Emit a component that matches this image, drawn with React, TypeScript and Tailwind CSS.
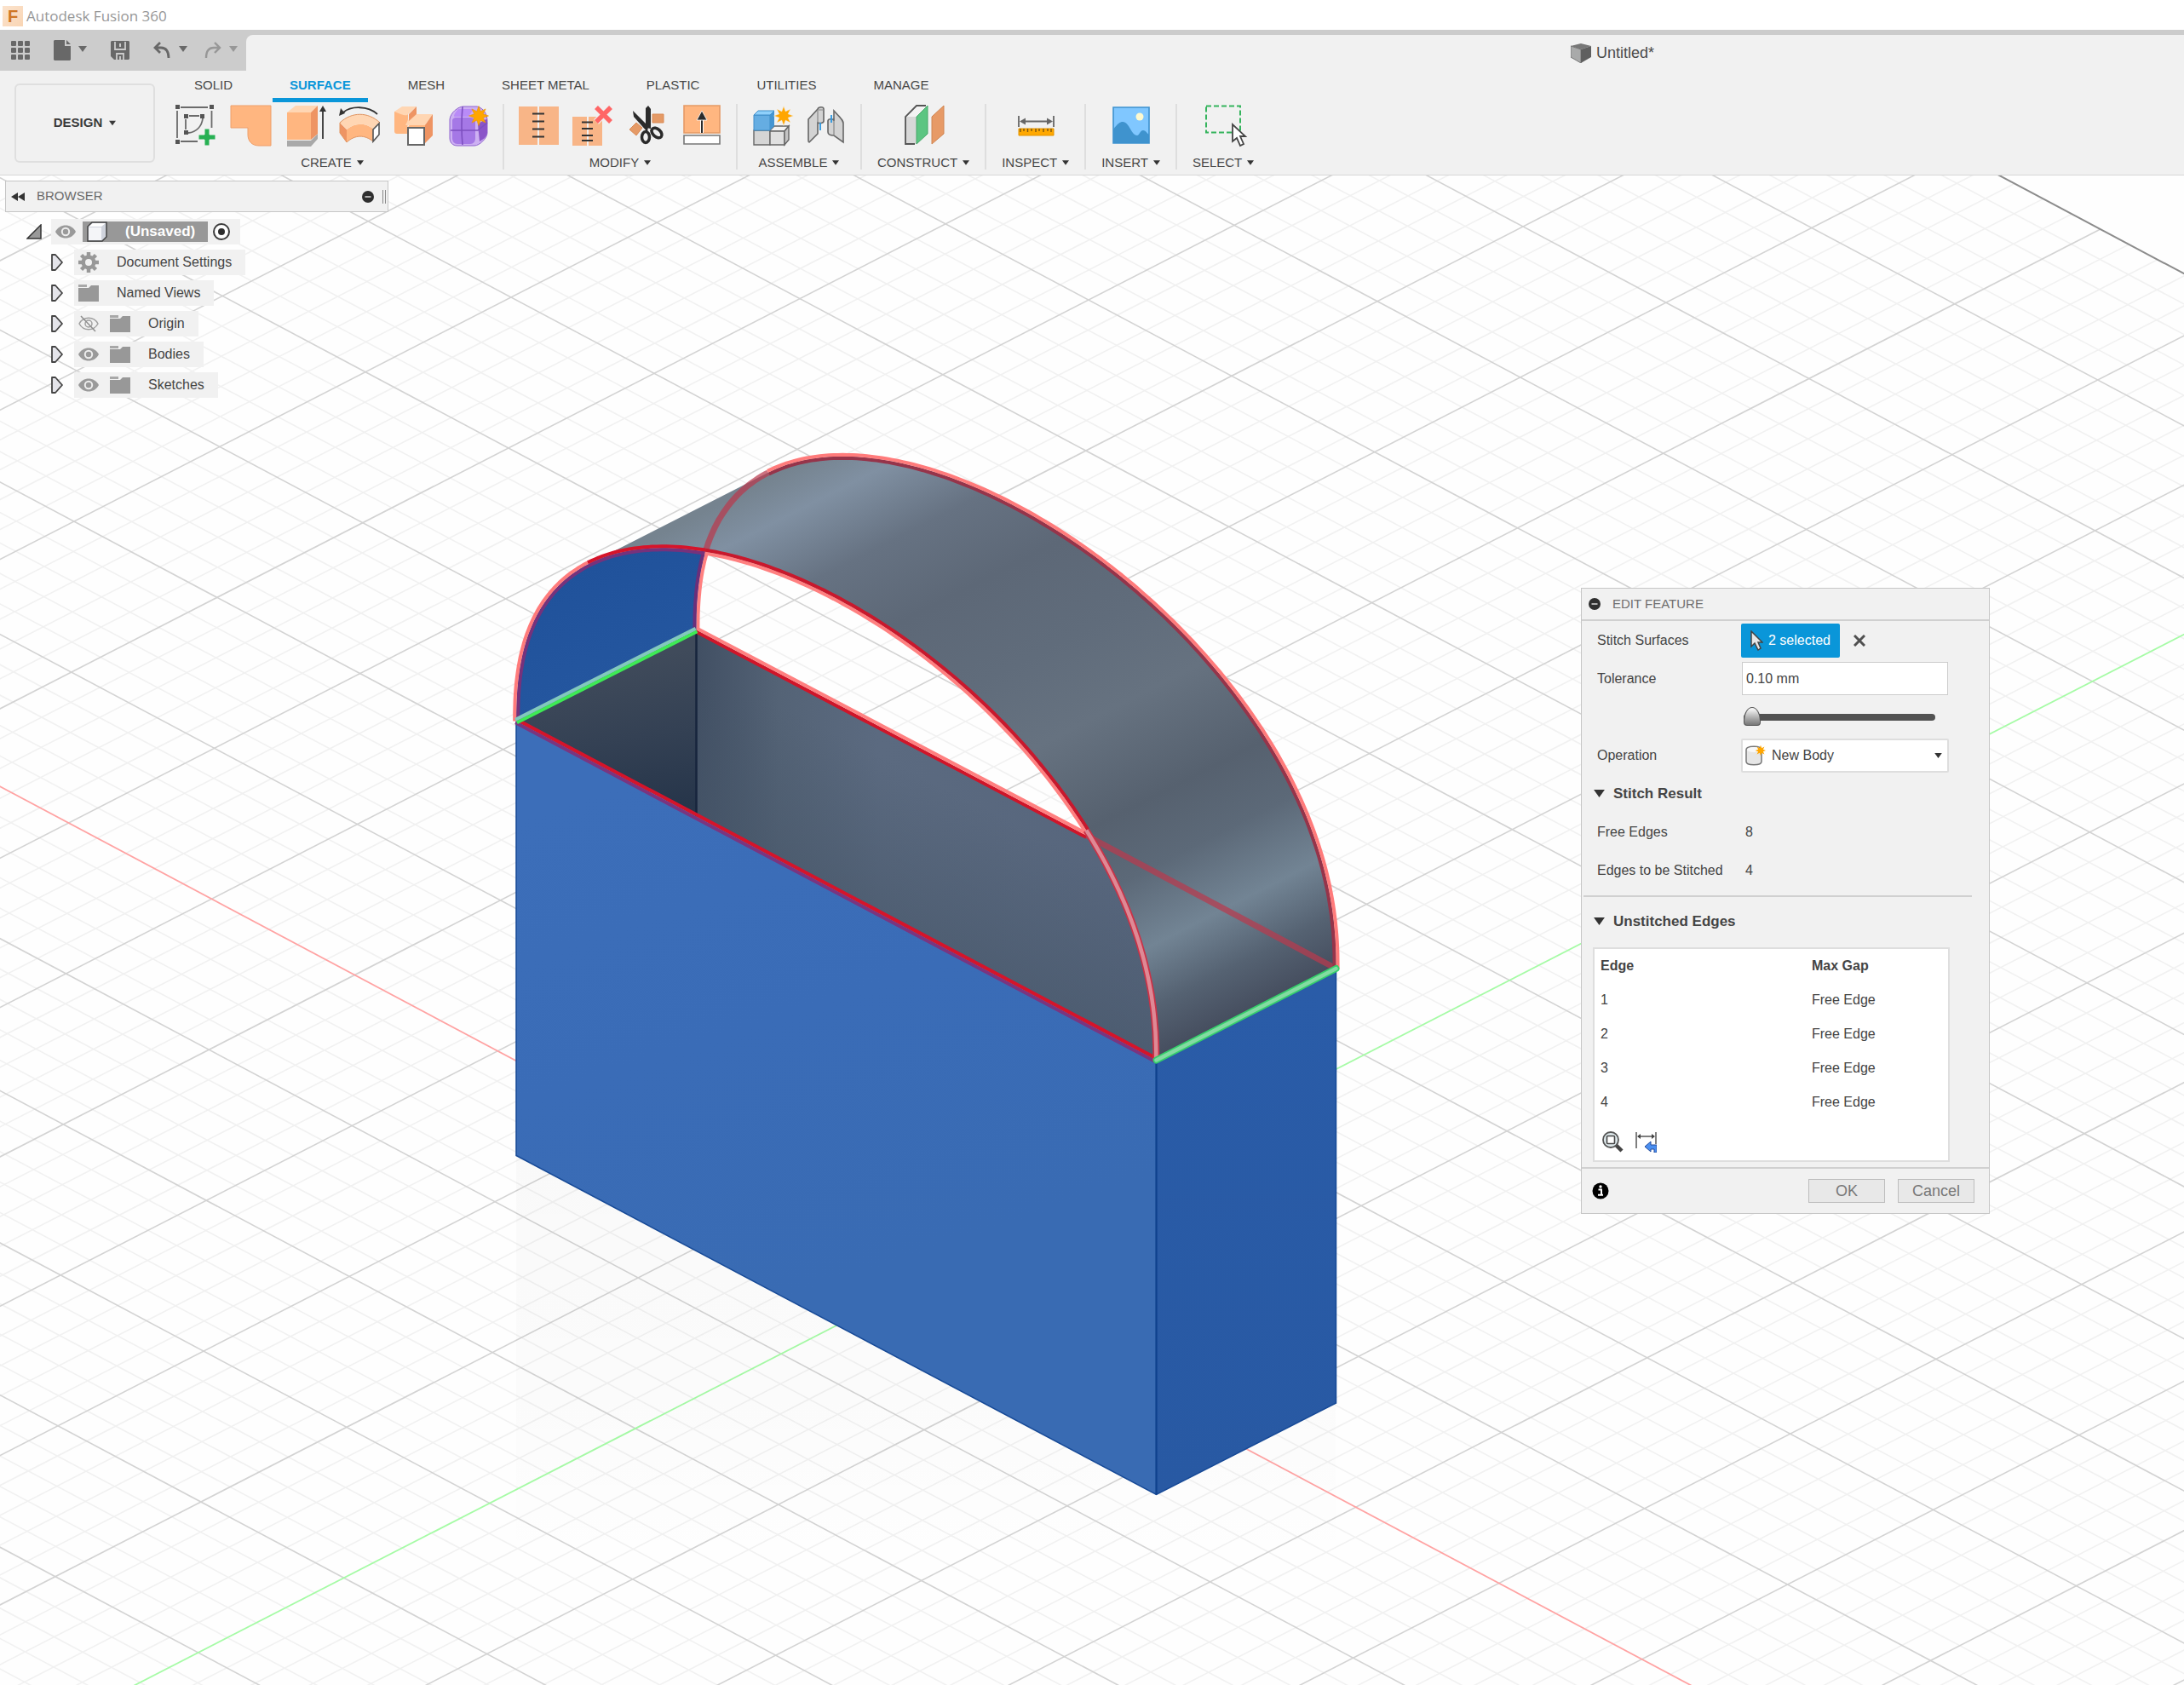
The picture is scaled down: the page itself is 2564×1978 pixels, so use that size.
import { useState, type ReactNode } from "react";
import clsx from "clsx";

type Pt = [number, number];

/* ---------- small shared bits ---------- */

function Caret({ className }: { className?: string }) {
  return (
    <svg viewBox="0 0 10 7" className={clsx("flex-none", className)} fill="currentColor">
      <path d="M0 0h10L5 7z" />
    </svg>
  );
}

function MinusDot({ className }: { className?: string }) {
  return (
    <svg viewBox="0 0 14 14" className={clsx("flex-none", className)}>
      <circle cx="7" cy="7" r="7" fill="#2f2f2f" />
      <path d="M3.5 7h7" stroke="#ddd" strokeWidth="1.5" />
    </svg>
  );
}

const STAR =
  "M0-11.5 2.2-5.2 8.1-8.1 5.2-2.2 11.5 0 5.2 2.2 8.1 8.1 2.2 5.2 0 11.5-2.2 5.2-8.1 8.1-5.2 2.2-11.5 0-5.2-2.2-8.1-8.1-2.2-5.2z";

function RibbonIcon({ children }: { children: ReactNode }) {
  return (
    <svg viewBox="0 0 48 50" className="h-[50px] w-12 overflow-visible" fill="none">
      {children}
    </svg>
  );
}

/* ---------- ribbon icons ---------- */

const icons = {
  sketch: (
    <RibbonIcon>
      <g stroke="#6b6b6b" strokeWidth="1.8">
        <path d="M6 4h32M2 8v32M42.500 8v20M6 44h20M16 14h12M12 18v12M32 17c-1 9-7 16-17 17" />
      </g>
      <g fill="#555">
        <path d="M0 1h5v5H0zM40 1h5v5h-5zM0 42h5v5H0zM10 12h5v5h-5zM29 12h5v5h-5zM10 31h5v5h-5z" />
      </g>
      <path d="M34 29h6v7h7v6h-7v7h-6v-7h-7v-6h7z" fill="#27b053" stroke="#f1f1f1" strokeWidth="1" />
    </RibbonIcon>
  ),
  patch: (
    <RibbonIcon>
      <path d="M1 2h47v47H34c-8 0-13-5-13-13v-8H1z" fill="#ffb680" stroke="#ee9f6b" />
    </RibbonIcon>
  ),
  extrude: (
    <RibbonIcon>
      <path d="M3 43h28l8-8v6l-8 9H3z" fill="#a9a9a9" />
      <path d="M3 10h28v32H3z" fill="#ffb680" />
      <path d="M3 10l10-8h26l-8 8z" fill="#ffd6b3" />
      <path d="M31 10l8-8v33l-8 7z" fill="#ee9463" />
      <path d="M45 41V8" stroke="#333" strokeWidth="1.8" />
      <path d="M41 9l4-7 4 7z" fill="#333" />
    </RibbonIcon>
  ),
  revolve: (
    <RibbonIcon>
      <path d="M1 22l8 8v15L1 34z" fill="#ee9463" />
      <path d="M9 30c10-8 21-8 31-1v15c-10-8-21-8-31 1z" fill="#ffb680" />
      <path d="M1 22c14-13 33-13 47 0l-8 7c-10-7-21-7-31 1z" fill="#ffd6b3" />
      <path d="M1 22c14-13 33-13 47 0M1 22v12l8 11c10-9 21-9 31-1" stroke="#e0935f" />
      <path d="M40 30l7-7v13l-7 8z" fill="#fff" stroke="#555" strokeWidth="1.6" />
      <path d="M45 12C34 2 14 2 5 10" stroke="#333" strokeWidth="1.8" />
      <path d="M0 14l2-9 5 6z" fill="#333" />
    </RibbonIcon>
  ),
  offsetShape: (
    <RibbonIcon>
      <path d="M1 9h16v8l-1 18H4c-2 0-3-1-3-3z" fill="#ffb680" />
      <path d="M17 27l9-12h12v10l-2 21H17z" fill="#ffb680" />
      <path d="M1 9l9-6h17l-10 9c-1 3-9 0-16-3z" fill="#ffd6b3" />
      <path d="M14 25l3-6 10-7h19l-9 13z" fill="#ffd6b3" />
      <path d="M27 3v9l-9 8v-8zM37 25l9-13v25l-9 9z" fill="#ee9463" />
      <path d="M17 28h19v20H17z" fill="#fff" stroke="#666" strokeWidth="2" />
    </RibbonIcon>
  ),
  form: (
    <RibbonIcon>
      <path d="M2 18C3 10 12 3 18 3h16c8 2 12 9 12 17v14c0 6-9 15-15 15H11c-6 0-9-4-9-9z" fill="#cdb0f2" stroke="#8e62cf" />
      <path d="M35 24c4-3 8-6 11-6v16c-1 5-5 8-9 10z" fill="#8a55c8" />
      <path d="M12 6h18l-6 9H8c-3 0 1-6 4-9z" fill="#b98bf7" />
      <path d="M5 20c0-3 2-4 5-4h16c4 0 6 3 6 6v18c0 4-2 7-6 7H11c-4 0-6-3-6-7z" fill="#a578e6" />
      <path d="M17 3c-1 12-1 34 0 45M3 31h32l11-9" stroke="#7d4fc0" strokeWidth="1.6" />
      <path d={STAR} transform="translate(36 14)" fill="#ffa600" stroke="#e79200" strokeWidth=".6" />
    </RibbonIcon>
  ),
  stitch: (
    <RibbonIcon>
      <path d="M1 3h22v45H1zM25 3h23v45H25z" fill="#f8b587" />
      <path d="M17 11.500h14M17 20.500h14M17 29.500h14M17 38.500h14" stroke="#333" strokeWidth="1.8" />
    </RibbonIcon>
  ),
  unstitch: (
    <RibbonIcon>
      <path d="M0 15h17v34H0zM19 15h16v34H19z" fill="#f8b587" />
      <path d="M11 21.500h13M11 29h13M11 37h13M11 43h13" stroke="#333" strokeWidth="1.8" />
      <path d="M28 4l17 17M45 4L28 21" stroke="#f1f1f1" strokeWidth="8" />
      <path d="M28 4l17 17M45 4L28 21" stroke="#ff6666" strokeWidth="5.500" />
    </RibbonIcon>
  ),
  trim: (
    <RibbonIcon>
      <path d="M30 12h13v10H30zM11 22l7 6-7 9-8-7z" fill="#e59a66" stroke="#d98a55" />
      <path d="M7 8l18 18-1 7-16-18zM22 5l3-3 3 4v23l-6-1z" fill="#2b2b2b" />
      <ellipse cx="22" cy="39" rx="4.500" ry="6.500" stroke="#2b2b2b" strokeWidth="3.500" />
      <ellipse cx="35" cy="34" rx="4.500" ry="7" transform="rotate(-48 35 34)" stroke="#2b2b2b" strokeWidth="3.500" />
    </RibbonIcon>
  ),
  extend: (
    <RibbonIcon>
      <path d="M3 2h42v32H3z" fill="#ffb680" stroke="#e59a66" strokeWidth="1.600" />
      <path d="M3 37h42v10H3z" fill="#fff" stroke="#777" strokeWidth="1.600" />
      <path d="M24 34V16" stroke="#fff" strokeWidth="4" />
      <path d="M24 34V14" stroke="#2b2b2b" strokeWidth="2" />
      <path d="M18 19l6-11 6 11z" fill="#2b2b2b" stroke="#fff" strokeWidth=".8" />
    </RibbonIcon>
  ),
  component: (
    <RibbonIcon>
      <path d="M3 31h19v17H3z" fill="#d5d5d5" stroke="#666" strokeWidth="1.400" />
      <path d="M22 31l5-5h17l-5 6H22z" fill="#f3f3f3" stroke="#666" strokeWidth="1.400" />
      <path d="M22 32h17v16H22z" fill="#e0e0e0" stroke="#666" strokeWidth="1.400" />
      <path d="M39 32l5-6v16l-5 6z" fill="#c4c4c4" stroke="#666" strokeWidth="1.400" />
      <path d="M3 13h19v18H3z" fill="#65ade2" stroke="#3f8dc8" />
      <path d="M3 13l5-5h19l-5 5z" fill="#8fd0fb" stroke="#3f8dc8" />
      <path d="M22 13l5-5v18l-5 5z" fill="#4595d1" />
      <path d={STAR} transform="translate(38 14)" fill="#ffa600" stroke="#f1f1f1" strokeWidth=".5" />
    </RibbonIcon>
  ),
  joint: (
    <RibbonIcon>
      <path d="M3 18L14 6c1-3 7-3 7 0v14c0 3-5 3-7 2v13L4 45c-1 0-1 0-1-2z" fill="#d3d3d3" stroke="#666" strokeWidth="1.600" />
      <path d="M14 7v15M15 7h6" stroke="#888" strokeWidth="1.200" />
      <path d="M26 20c0-3 7-3 7 0V8c8 9 11 11 11 15v22l-11-8c-4 0-7-1-7-4z" fill="#d3d3d3" stroke="#666" strokeWidth="1.600" />
      <path d="M33 19v17M33 9v8" stroke="#888" strokeWidth="1.200" />
      <path d="M17 22v9M30 13v9" stroke="#2a96e0" strokeWidth="1.800" />
    </RibbonIcon>
  ),
  construct: (
    <RibbonIcon>
      <path d="M3 15L16 2h13L16 15z" fill="#f3f3f3" />
      <path d="M3 15h13v32H3z" fill="#d8d8d8" />
      <path d="M27 2H16L3 15v32h11" stroke="#555" strokeWidth="1.800" />
      <path d="M16 15L29 2v33L16 47z" fill="#5cc582" stroke="#46a869" />
      <path d="M34 15L48 2v33L34 47z" fill="#e79a66" stroke="#d08653" />
    </RibbonIcon>
  ),
  measure: (
    <RibbonIcon>
      <path d="M4 14v13M45 14v13M8 20.500h33" stroke="#666" strokeWidth="1.800" />
      <path d="M5 20.500l7-4v8zM44 20.500l-7-4v8z" fill="#666" />
      <path d="M4 29h41v8H4z" fill="#ffa800" stroke="#e39400" />
      <path d="M6 29v4M10 29v3M14.500 29v4M19 29v3M24 29v4M28 29v3M33 29v4M38 29v3M42 29v4" stroke="#7a5410" strokeWidth="1.400" />
    </RibbonIcon>
  ),
  picture: (
    <RibbonIcon>
      <path d="M3 4h42v42H3z" fill="#80c7ff" />
      <path d="M3 30c5-7 8-9 11-9 8 0 10 16 17 16 3 0 3-6 7-6 3 0 4 3 7 5v10H3z" fill="#3f93ce" />
      <circle cx="34" cy="15" r="4.500" fill="#fdf9cf" />
      <path d="M3 4h42v42H3z" stroke="#3c92cf" strokeWidth="1.600" />
    </RibbonIcon>
  ),
  select: (
    <RibbonIcon>
      <path d="M4 2.500h40v31H4z" stroke="#35b45d" strokeWidth="2" strokeDasharray="6 3" />
      <path d="M35 24v20l5-4 4 9 4-2-4-9h6z" fill="#fff" stroke="#444" strokeWidth="1.800" />
    </RibbonIcon>
  ),
};

const groups: { label: string; tools: { name: string; icon: ReactNode }[] }[] = [
  {
    label: "CREATE",
    tools: [
      { name: "Create Sketch", icon: icons.sketch },
      { name: "Patch", icon: icons.patch },
      { name: "Extrude", icon: icons.extrude },
      { name: "Revolve", icon: icons.revolve },
      { name: "Offset", icon: icons.offsetShape },
      { name: "Create Form", icon: icons.form },
    ],
  },
  {
    label: "MODIFY",
    tools: [
      { name: "Stitch", icon: icons.stitch },
      { name: "Unstitch", icon: icons.unstitch },
      { name: "Trim", icon: icons.trim },
      { name: "Extend", icon: icons.extend },
    ],
  },
  {
    label: "ASSEMBLE",
    tools: [
      { name: "New Component", icon: icons.component },
      { name: "Joint", icon: icons.joint },
    ],
  },
  { label: "CONSTRUCT", tools: [{ name: "Offset Plane", icon: icons.construct }] },
  { label: "INSPECT", tools: [{ name: "Measure", icon: icons.measure }] },
  { label: "INSERT", tools: [{ name: "Canvas", icon: icons.picture }] },
  { label: "SELECT", tools: [{ name: "Window Selection", icon: icons.select }] },
];

const tabs = ["SOLID", "SURFACE", "MESH", "SHEET METAL", "PLASTIC", "UTILITIES", "MANAGE"];

/* ---------- header ---------- */

function TitleBar() {
  return (
    <div className="flex h-[35px] items-center gap-1 bg-white pt-[2px] pl-[3px]">
      <span className="grid h-6 w-6 place-items-center bg-linear-to-br from-[#fbe3cd] to-[#f9d5b4] text-xl leading-none font-black text-[#cf7626]">
        F
      </span>
      <span className="font-['Open_Sans',sans-serif] text-[17px] text-[#979797]">Autodesk Fusion 360</span>
    </div>
  );
}

function QuickAccess() {
  return (
    <div className="flex h-12 w-[289px] flex-none items-center pl-[13px] text-[#686868]">
      <button aria-label="Data Panel">
        <svg viewBox="0 0 22 22" className="h-[22px] w-[22px]" fill="currentColor">
          {[0, 8, 16].map((y) => [0, 8, 16].map((x) => <rect key={`${x}-${y}`} x={x} y={y} width="6" height="6" rx="1" />))}
        </svg>
      </button>
      <button aria-label="File" className="ml-7 flex items-center gap-[9px]">
        <svg viewBox="0 0 20 24" className="h-6 w-5" fill="currentColor">
          <path d="M1 0h12v7h7v16l-1 1H1l-1-1V1zM15 0l5 5h-5z" />
        </svg>
        <Caret className="mb-1 h-[7px] w-[10px]" />
      </button>
      <button aria-label="Save" className="ml-7">
        <svg viewBox="0 0 22 22" className="h-[22px] w-[22px]">
          <path d="M1 0h20l1 1v20l-1 1H4l-4-4V1z" fill="currentColor" />
          <path d="M5 1v9h12V1M7 22v-7h8v7M11 22v-4" fill="none" stroke="#ccc" strokeWidth="1.800" />
          <path d="M11 3v4" stroke="#ccc" strokeWidth="2" />
        </svg>
      </button>
      <button aria-label="Undo" className="ml-7 flex items-center gap-[10px]">
        <svg viewBox="0 0 20 20" className="h-5 w-5" fill="none" stroke="currentColor" strokeWidth="2.800">
          <path d="M8 1L2 7l6 6M2 7h7c6 0 9 4 9 12" />
        </svg>
        <Caret className="mb-1 h-[7px] w-[10px]" />
      </button>
      <button aria-label="Redo" className="ml-5 flex items-center gap-[9px] text-[#979797]">
        <svg viewBox="0 0 20 20" className="h-5 w-5" fill="none" stroke="currentColor" strokeWidth="2.400">
          <path d="M12 1l6 6-6 6M18 7h-7C5 7 2 11 2 19" />
        </svg>
        <Caret className="mb-1 h-[7px] w-[10px]" />
      </button>
    </div>
  );
}

function Ribbon() {
  const [active, setActive] = useState("SURFACE");
  return (
    <div className="flex h-[123px] border-b border-[#d6d6d6] bg-[#f1f1f1] pl-[17px] text-[15px] text-[#474747]">
      <button className="mt-[15px] flex h-[93px] w-[165px] flex-none items-center justify-center gap-2 rounded-md border-2 border-[#dfdfdf] font-bold text-[#3a3a3a]">
        DESIGN
        <Caret className="h-[7px] w-2" />
      </button>
      <div className="flex flex-col">
        <nav className="ml-[26px] flex gap-[27px]">
          {tabs.map((tab) => (
            <button
              key={tab}
              onClick={() => setActive(tab)}
              className={clsx(
                "h-[37px] border-b-5 px-5 pt-[2px]",
                tab === active ? "border-[#0a96d9] font-bold text-[#0a96d9]" : "border-transparent",
              )}
            >
              {tab}
            </button>
          ))}
        </nav>
        <div className="ml-2 flex pt-[2px]">
          {groups.map((g, i) => (
            <div key={g.label} className="flex">
              {i > 0 && <div className="h-[77px] w-[2px] bg-[#dedede]" />}
              <div className="flex flex-col items-center px-2">
                <div className="flex">
                  {g.tools.map((tool) => (
                    <button key={tool.name} aria-label={tool.name} className="flex w-16 justify-center">
                      {tool.icon}
                    </button>
                  ))}
                </div>
                <button className="mt-[5px] flex h-7 items-center gap-[6px] px-[10px]">
                  {g.label}
                  <Caret className="h-[6px] w-2 text-[#333]" />
                </button>
              </div>
            </div>
          ))}
        </div>
      </div>
    </div>
  );
}

function Header() {
  return (
    <header>
      <TitleBar />
      <div className="flex h-12 bg-[#ccc]">
        <QuickAccess />
        <div className="mt-[6px] flex flex-1 items-center rounded-tl-lg bg-[#f1f1f1] text-lg text-[#4a4a4a]">
          <div className="grow-5" />
          <svg viewBox="0 0 24 24" className="mr-[6px] h-6 w-6">
            <path d="M0 4l12-3 12 3-12 4z" fill="#777" />
            <path d="M0 4l12 4v16L0 17z" fill="#a9aaaa" stroke="#777" />
            <path d="M24 4L12 8v16l12-7z" fill="#5f5f5f" />
          </svg>
          <span>Untitled*</span>
          <div className="grow-2" />
        </div>
      </div>
      <Ribbon />
    </header>
  );
}

/* ---------- 3D canvas ---------- */

const ORIGIN: Pt = [1088, 1501.5];
const STEP_X: Pt = [167.9, 89.25];
const STEP_Y: Pt = [171.05, -87.7];
const EDGE_ROW = 11;

const grid = (m: number, n: number): Pt => [
  ORIGIN[0] + m * STEP_X[0] + n * STEP_Y[0],
  ORIGIN[1] + m * STEP_X[1] + n * STEP_Y[1],
];

// vertices of the open box, and the arch that stands on it
const L: Pt = [606, 846.5];
const B: Pt = [817.5, 739.5];
const F: Pt = [1357.5, 1244.5];
const R: Pt = [1568.5, 1137];
const FRONT: Pt = [981.75, 1045.5];
const BACK: Pt = [1193, 938];
const HEIGHT = 510;

// where the outline of the arch turns away, and where the two rims cross
const TURN = 39.2;
const CROSS_FRONT = 65.8;
const CROSS_BACK = 13.7;
const CROSS_WALL = 141.4;

// the profile is a little squarer than an ellipse
function arc(c: Pt, from: number, to: number): Pt[] {
  const n = Math.max(2, Math.ceil(Math.abs(to - from)));
  return Array.from({ length: n + 1 }, (_, i) => {
    const t = ((from + ((to - from) * i) / n) * Math.PI) / 180;
    const rise = Math.pow(Math.max(0, Math.sin(t)), 0.88);
    return [c[0] - 375.6 * Math.cos(t), c[1] - 199 * Math.cos(t) - 343 * rise];
  });
}

// moves a polyline sideways; positive is to the left of its direction
function shift(pts: Pt[], d: number): Pt[] {
  return pts.map(([x, y], i) => {
    const a = pts[Math.max(0, i - 1)];
    const b = pts[Math.min(pts.length - 1, i + 1)];
    const len = Math.hypot(b[0] - a[0], b[1] - a[1]);
    return [x + ((b[1] - a[1]) / len) * d, y - ((b[0] - a[0]) / len) * d];
  });
}

const str = (pts: Pt[]) => pts.map(([x, y]) => `${x.toFixed(1)},${y.toFixed(1)}`).join(" ");

function Edge({ pts, outer, inner }: { pts: Pt[]; outer: string; inner: string }) {
  return (
    <g fill="none" strokeWidth="4" strokeLinejoin="round">
      <polyline points={str(shift(pts, -2))} stroke={inner} />
      <polyline points={str(shift(pts, 2))} stroke={outer} />
    </g>
  );
}

function GridLine({ from, to, stroke, width }: { from: Pt; to: Pt; stroke: string; width: number }) {
  return <line x1={from[0]} y1={from[1]} x2={to[0]} y2={to[1]} stroke={stroke} strokeWidth={width} />;
}

function Grid() {
  const minor: ReactNode[] = [];
  const major: ReactNode[] = [];
  for (let i = -60; i <= 60; i++) {
    const k = i / 5;
    if (i === 0) continue;
    const bold = i % 5 === 0;
    const stroke = bold ? "#d3d3d3" : "#f1f1f1";
    const list = bold ? major : minor;
    list.push(<GridLine key={`y${i}`} from={grid(k, -16)} to={grid(k, EDGE_ROW)} stroke={stroke} width={1.6} />);
    if (k < EDGE_ROW) {
      list.push(<GridLine key={`x${i}`} from={grid(-16, k)} to={grid(16, k)} stroke={stroke} width={1.6} />);
    }
  }
  return (
    <g>
      {minor}
      {major}
      <GridLine from={grid(-16, EDGE_ROW)} to={grid(16, EDGE_ROW)} stroke="#8c8c8c" width={2} />
      <GridLine from={grid(-16, 0)} to={grid(16, 0)} stroke="#ffa3a3" width={1.8} />
      <GridLine from={grid(0, -16)} to={grid(0, EDGE_ROW)} stroke="#a6fba6" width={1.8} />
    </g>
  );
}

function Model() {
  const down = ([x, y]: Pt): Pt => [x, y + HEIGHT];
  const wallFoot: Pt = [817.5, 958.5];
  const cross: Pt = [1276, 981];

  return (
    <g>
      <polygon points="606,1355 606,1840 1568,1840 1568,1647 1357,1755" fill="url(#floor)" />
      {/* inside walls */}
      <polygon points={str([L, B, wallFoot])} fill="url(#sideWall)" />
      <polygon points={str([B, R, F, wallFoot])} fill="url(#backWall)" />
      <polygon points={str([B, R, F, wallFoot])} fill="url(#backWallShade)" />
      <line x1={B[0]} y1={B[1]} x2={wallFoot[0]} y2={wallFoot[1]} stroke="#17253d" strokeWidth="2.5" />
      {/* inner side of the arch */}
      <polygon points={str([...arc(FRONT, 0, CROSS_FRONT), ...arc(BACK, CROSS_BACK, 0)])} fill="url(#inner)" />
      {/* outer side of the arch */}
      <polygon points={str([...arc(FRONT, TURN, 180), ...arc(BACK, 180, TURN)])} fill="url(#band)" />
      {/* outer faces */}
      <polygon points={str([L, F, down(F), down(L)])} fill="url(#face)" />
      <polygon points={str([F, R, down(R), down(F)])} fill="url(#faceSide)" />
      <polyline points={str([L, down(L), down(F), down(R), R])} fill="none" stroke="#174a97" strokeWidth="1.5" />
      <polyline points={str([F, down(F)])} fill="none" stroke="#0f418d" strokeWidth="2.2" />

      {/* edges hidden behind the arch */}
      <g fill="none" stroke="#b93a4d" strokeOpacity="0.72" strokeWidth="7">
        <polyline points={str(arc(BACK, CROSS_BACK, TURN))} />
        <polyline points={str([cross, R])} />
      </g>
      {/* free edges */}
      <Edge pts={[L, F]} outer="#d6142a" inner="#7a3580" />
      <Edge pts={[B, cross]} outer="#ff8080" inner="#cf1529" />
      <Edge pts={arc(BACK, 0, CROSS_BACK)} outer="#6b2f7a" inner="#ff8080" />
      <Edge pts={arc(BACK, TURN, 180)} outer="#ff7b7b" inner="#96344a" />
      <Edge pts={arc(FRONT, 0, TURN)} outer="#ff7b7b" inner="#76327c" />
      <Edge pts={arc(FRONT, TURN, CROSS_FRONT)} outer="#d6142a" inner="#76327c" />
      <Edge pts={arc(FRONT, CROSS_FRONT, CROSS_WALL)} outer="#c9182c" inner="#ff8080" />
      <polyline points={str(arc(FRONT, CROSS_WALL, 180))} fill="none" stroke="#c93348" strokeWidth="8" />
      <polyline points={str(arc(FRONT, CROSS_WALL, 180))} fill="none" stroke="#de8995" strokeWidth="4.5" />
      {/* edges to be stitched */}
      <Edge pts={[L, B]} outer="#82c9bd" inner="#3eea55" />
      <g fill="none" strokeLinecap="round">
        <polyline points={str([F, R])} stroke="#35cf6b" strokeWidth="8" />
        <polyline points={str([F, R])} stroke="#83dba2" strokeWidth="4.5" />
      </g>
    </g>
  );
}

function Gradient({ id, line, stops }: { id: string; line: [number, number, number, number]; stops: [number, string][] }) {
  return (
    <linearGradient id={id} gradientUnits="userSpaceOnUse" x1={line[0]} y1={line[1]} x2={line[2]} y2={line[3]}>
      {stops.map(([at, color]) => (
        <stop key={at} offset={at} stopColor={color} />
      ))}
    </linearGradient>
  );
}

function Viewport() {
  return (
    <svg
      viewBox="0 206 2564 1772"
      preserveAspectRatio="xMinYMin slice"
      className="absolute inset-0 h-full w-full"
      role="img"
      aria-label="Open box with an arched surface"
    >
      <defs>
        <Gradient
          id="band"
          line={[702, 664, 1072, 1390]}
          stops={[
            [0, "#75838f"],
            [0.06, "#8090a2"],
            [0.16, "#667282"],
            [0.27, "#5d6877"],
            [0.4, "#606c7b"],
            [0.52, "#667280"],
            [0.66, "#56616f"],
            [0.75, "#5c6978"],
            [0.85, "#728494"],
            [0.93, "#556272"],
            [1, "#454d5e"],
          ]}
        />
        <Gradient id="sideWall" line={[760, 770, 790, 950]} stops={[[0, "#404b5b"], [0.5, "#344154"], [1, "#26354a"]]} />
        <Gradient id="backWall" line={[817, 0, 1357, 0]} stops={[[0, "#414f63"], [0.18, "#546376"], [0.4, "#5b6a80"], [1, "#56657c"]]} />
        <Gradient id="backWallShade" line={[1060, 900, 980, 1060]} stops={[[0, "#46566900"], [1, "#46566999"]]} />
        <Gradient id="inner" line={[640, 620, 720, 800]} stops={[[0, "#2c5fa8"], [0.3, "#20529b"], [1, "#24569f"]]} />
        <Gradient id="face" line={[800, 900, 1000, 1500]} stops={[[0, "#3c6eb9"], [0.5, "#3a6cb7"], [1, "#396bb3"]]} />
        <Gradient id="faceSide" line={[1450, 1150, 1450, 1755]} stops={[[0, "#2a5ca8"], [1, "#2859a3"]]} />
        <Gradient id="floor" line={[0, 1355, 0, 1840]} stops={[[0, "#00000005"], [0.6, "#00000003"], [1, "#00000000"]]} />
      </defs>
      <Grid />
      <Model />
    </svg>
  );
}

/* ---------- browser tree ---------- */

function Eye({ hidden }: { hidden?: boolean }) {
  if (hidden) {
    return (
      <svg viewBox="0 0 24 20" className="h-5 w-6 flex-none" fill="none" stroke="#a0a0a0" strokeWidth="1.500">
        <path d="M1 10c5-9 17-9 22 0-5 9-17 9-22 0z" />
        <circle cx="12" cy="10" r="4" />
        <path d="M3 1l17 18" stroke="#8e8e8e" />
      </svg>
    );
  }
  return (
    <svg viewBox="0 0 24 20" className="h-5 w-6 flex-none">
      <path d="M0 10c5-10 19-10 24 0-5 10-19 10-24 0z" fill="#9a9a9a" />
      <circle cx="12" cy="10" r="4.200" fill="none" stroke="#eee" strokeWidth="2" />
    </svg>
  );
}

function Folder() {
  return (
    <svg viewBox="0 0 24 20" className="h-5 w-6 flex-none" fill="#989898">
      <path d="M0 0h10v3H0z" fill="#a8a8a8" />
      <path d="M0 4h12l3-3h9v19H0z" />
    </svg>
  );
}

function Gear() {
  return (
    <svg viewBox="-12 -12 24 24" className="h-6 w-6 flex-none">
      {[0, 45, 90, 135].map((a) => (
        <path key={a} d="M0-12V12" transform={`rotate(${a})`} stroke="#989898" strokeWidth="4.500" />
      ))}
      <circle r="8.500" fill="#989898" />
      <circle r="4" fill="#f1f1f1" />
    </svg>
  );
}

const nodes: { label: string; eye?: "on" | "off"; gear?: boolean }[] = [
  { label: "Document Settings", gear: true },
  { label: "Named Views" },
  { label: "Origin", eye: "off" },
  { label: "Bodies", eye: "on" },
  { label: "Sketches", eye: "on" },
];

function BrowserPanel() {
  return (
    <aside className="absolute top-[6px] left-[6px] w-[450px] text-base text-[#444]">
      <div className="flex h-[37px] items-center border border-[#c6c6c6] bg-[#f1f1f1] pr-[2px] pl-[6px]">
        <button aria-label="Collapse browser">
          <svg viewBox="0 0 16 10" className="h-[10px] w-4" fill="#333">
            <path d="M8 0v10L0 5zM16 0v10L8 5z" />
          </svg>
        </button>
        <h2 className="ml-[14px] flex-1 text-[15px] text-[#6a6a6a]">BROWSER</h2>
        <button aria-label="Minimize browser">
          <MinusDot className="h-[14px] w-[14px]" />
        </button>
        <span className="ml-[10px] h-4 w-1 border-x border-[#888]" />
      </div>

      <ul className="mt-2 space-y-[6px]">
        <li className="flex h-[30px] items-center pl-[25px]">
          <button aria-label="Collapse (Unsaved)">
            <svg viewBox="0 0 18 18" className="h-[18px] w-[18px]">
              <path d="M1 17L17 1v16z" fill="#999" stroke="#333" strokeWidth="1.500" />
            </svg>
          </button>
          <div className="ml-[11px] flex h-[30px] items-center bg-[#f1f1f1] pr-3 pl-[5px]">
            <Eye />
            <div className="ml-2 flex h-6 items-center bg-[#989898] pr-[15px] pl-[5px]">
              <svg viewBox="0 0 24 24" className="h-6 w-6">
                <path d="M1 6l5-5h17v17l-5 5H1z" fill="#cfd3dc" stroke="#444" strokeWidth="1.500" />
                <path d="M2 7h15v15H2z" fill="#f4f5f8" />
                <path d="M2 6l5-4h15l-5 4z" fill="#fff" />
              </svg>
              <span className="ml-[21px] text-[17px] font-bold text-white">(Unsaved)</span>
            </div>
            <label className="ml-[6px] grid h-5 w-5 place-items-center rounded-full border-2 border-[#3c3c3c] bg-white">
              <input type="radio" defaultChecked aria-label="Activate (Unsaved)" className="h-2 w-2 appearance-none rounded-full bg-[#2d2d2d]" />
            </label>
          </div>
        </li>
        {nodes.map((n) => (
          <li key={n.label} className="flex h-[30px] items-center pl-[54px]">
            <button aria-label={`Expand ${n.label}`}>
              <svg viewBox="0 0 14 20" className="h-5 w-[14px]">
                <path d="M1 1h4l8 9-8 9H1z" fill="#e4e4ea" stroke="#444" strokeWidth="1.800" strokeLinejoin="round" />
              </svg>
            </button>
            <div className="ml-[13px] flex h-[30px] items-center bg-[#f1f1f1] pr-4 pl-[5px]">
              {n.eye && (
                <span className="mr-[13px]">
                  <Eye hidden={n.eye === "off"} />
                </span>
              )}
              {n.gear ? <Gear /> : <Folder />}
              <span className="ml-[21px]">{n.label}</span>
            </div>
          </li>
        ))}
      </ul>
    </aside>
  );
}

/* ---------- edit feature dialog ---------- */

const edges = [1, 2, 3, 4];

function Section({ title }: { title: string }) {
  return (
    <h3 className="flex h-[45px] items-center gap-[10px] pl-[14px] text-[17px] font-bold">
      <Caret className="h-[9px] w-[13px] text-[#333]" />
      {title}
    </h3>
  );
}

function EditFeature() {
  const [tolerance, setTolerance] = useState("0.10 mm");
  return (
    <section className="absolute top-[484px] right-[228px] w-[480px] border border-[#c6c6c6] bg-[#f1f1f1] text-base text-[#444]">
      <div className="flex h-[38px] items-center gap-[14px] border-b-2 border-[#d0d0d0] pl-2">
        <button aria-label="Collapse dialog">
          <MinusDot className="h-[14px] w-[14px]" />
        </button>
        <h2 className="text-[15px] text-[#6f6f6f]">EDIT FEATURE</h2>
      </div>

      <div className="grid auto-rows-[45px] grid-cols-[169px_244px] items-center pl-[18px]">
        <span>Stitch Surfaces</span>
        <div className="flex items-center">
          <button className="flex h-10 items-center gap-[6px] rounded-xs bg-[#0a96d9] pr-[11px] pl-[11px] text-white">
            <svg viewBox="0 0 15 24" className="h-6 w-[15px]">
              <path d="M1 1v18l4-4 4 8 3-2-3-7h5z" fill="#e8e8e8" stroke="#444" strokeWidth="1.500" />
            </svg>
            2 selected
          </button>
          <button aria-label="Clear selection" className="ml-4">
            <svg viewBox="0 0 14 14" className="h-[14px] w-[14px]" stroke="#505050" strokeWidth="3">
              <path d="M1 1l12 12M13 1L1 13" />
            </svg>
          </button>
        </div>

        <label htmlFor="tolerance">Tolerance</label>
        <input
          id="tolerance"
          value={tolerance}
          onChange={(e) => setTolerance(e.target.value)}
          className="mx-px h-[39px] border border-[#ccc] bg-white px-1"
        />

        <span />
        <input
          type="range"
          aria-label="Tolerance slider"
          defaultValue={0}
          className="mr-4 ml-[3px] h-[22px] appearance-none bg-transparent [&::-webkit-slider-runnable-track]:h-2 [&::-webkit-slider-runnable-track]:rounded-full [&::-webkit-slider-runnable-track]:bg-[#525252] [&::-webkit-slider-thumb]:-mt-[8px] [&::-webkit-slider-thumb]:h-[22px] [&::-webkit-slider-thumb]:w-5 [&::-webkit-slider-thumb]:appearance-none [&::-webkit-slider-thumb]:rounded-t-[10px_16px] [&::-webkit-slider-thumb]:rounded-b-sm [&::-webkit-slider-thumb]:border [&::-webkit-slider-thumb]:border-[#555] [&::-webkit-slider-thumb]:bg-linear-to-b [&::-webkit-slider-thumb]:from-white [&::-webkit-slider-thumb]:to-[#777]"
        />

        <label htmlFor="operation">Operation</label>
        <div className="relative">
          <select id="operation" className="h-10 w-full appearance-none rounded-xs border-2 border-[#dedede] bg-white pl-[34px]">
            <option>New Body</option>
          </select>
          <svg viewBox="0 0 24 24" className="pointer-events-none absolute top-2 left-[5px] h-6 w-6">
            <path d="M1 5c0-5 18-5 18 0v14c0 5-18 5-18 0z" fill="#e6e6e6" stroke="#777" strokeWidth="1.500" />
            <ellipse cx="10" cy="5" rx="8" ry="3" fill="#f8f8f8" />
            <path d={STAR} transform="translate(18 6) scale(.55)" fill="#ffa600" />
          </svg>
          <Caret className="pointer-events-none absolute top-[17px] right-2 h-[6px] w-[9px] text-[#333]" />
        </div>
      </div>

      <Section title="Stitch Result" />
      <dl className="grid auto-rows-[45px] grid-cols-[174px_1fr] items-center pl-[18px]">
        <dt>Free Edges</dt>
        <dd>8</dd>
        <dt>Edges to be Stitched</dt>
        <dd>4</dd>
      </dl>
      <hr className="mt-[7px] mr-5 ml-[2px] border-t-2 border-[#d0d0d0]" />

      <div className="pt-[6px]">
        <Section title="Unstitched Edges" />
      </div>
      <div className="mt-2 mr-[46px] ml-[13px] border-2 border-[#dedede] bg-white">
        <table className="w-full text-left">
          <thead>
            <tr className="h-10">
              <th className="w-[248px] py-0 pl-[7px] font-bold">Edge</th>
              <th className="py-0 pl-[7px] font-bold">Max Gap</th>
            </tr>
          </thead>
          <tbody>
            {edges.map((e) => (
              <tr key={e} className="h-10">
                <td className="py-0 pl-[7px]">{e}</td>
                <td className="py-0 pl-[7px]">Free Edge</td>
              </tr>
            ))}
          </tbody>
        </table>
        <div className="flex h-12 items-center gap-[14px] pt-1 pl-[9px]">
          <button aria-label="Zoom to edge">
            <svg viewBox="0 0 25 25" className="h-[25px] w-[25px]" fill="none">
              <path d="M16 16l7 7" stroke="#444" strokeWidth="4.500" />
              <circle cx="10" cy="10" r="9" fill="#dfeaed" stroke="#555" strokeWidth="1.800" />
              <rect x="5.500" y="5.500" width="9" height="9" rx="1" fill="#fff" stroke="#444" strokeWidth="1.600" />
            </svg>
          </button>
          <button aria-label="Reset gap">
            <svg viewBox="0 0 25 25" className="h-[25px] w-[25px]" fill="none">
              <path d="M1 1v19M24 1v14M3 6h19" stroke="#555" strokeWidth="1.500" />
              <path d="M2 6l4-3v6zM23 6l-4-3v6z" fill="#444" />
              <path d="M11 18l7-6v4h7v9h-3v-4h-4v3z" fill="#4b8ff0" stroke="#234a9c" />
            </svg>
          </button>
        </div>
      </div>

      <div className="mt-[6px] flex h-[54px] items-center border-t-2 border-[#d0d0d0] pr-[17px] pl-3">
        <button aria-label="Info">
          <svg viewBox="0 0 20 20" className="h-5 w-5">
            <circle cx="10" cy="10" r="9.500" fill="#000" />
            <circle cx="10" cy="5" r="1.700" fill="#fff" />
            <path d="M7.500 8.500H11V14M7 14.800h6" stroke="#fff" strokeWidth="2" fill="none" />
          </svg>
        </button>
        <button className="mr-[15px] ml-auto h-7 w-[90px] border border-[#bdbdbd] bg-[#e8e8e8] text-lg leading-none text-[#777]">OK</button>
        <button className="h-7 w-[90px] border border-[#bdbdbd] bg-[#e8e8e8] text-lg leading-none text-[#777]">Cancel</button>
      </div>
    </section>
  );
}

export default function App() {
  return (
    <div className="flex min-h-screen flex-col bg-[#fefefe] font-['Liberation_Sans',Arial,sans-serif]">
      <Header />
      <main className="relative flex-1 overflow-hidden">
        <Viewport />
        <BrowserPanel />
        <EditFeature />
      </main>
    </div>
  );
}
